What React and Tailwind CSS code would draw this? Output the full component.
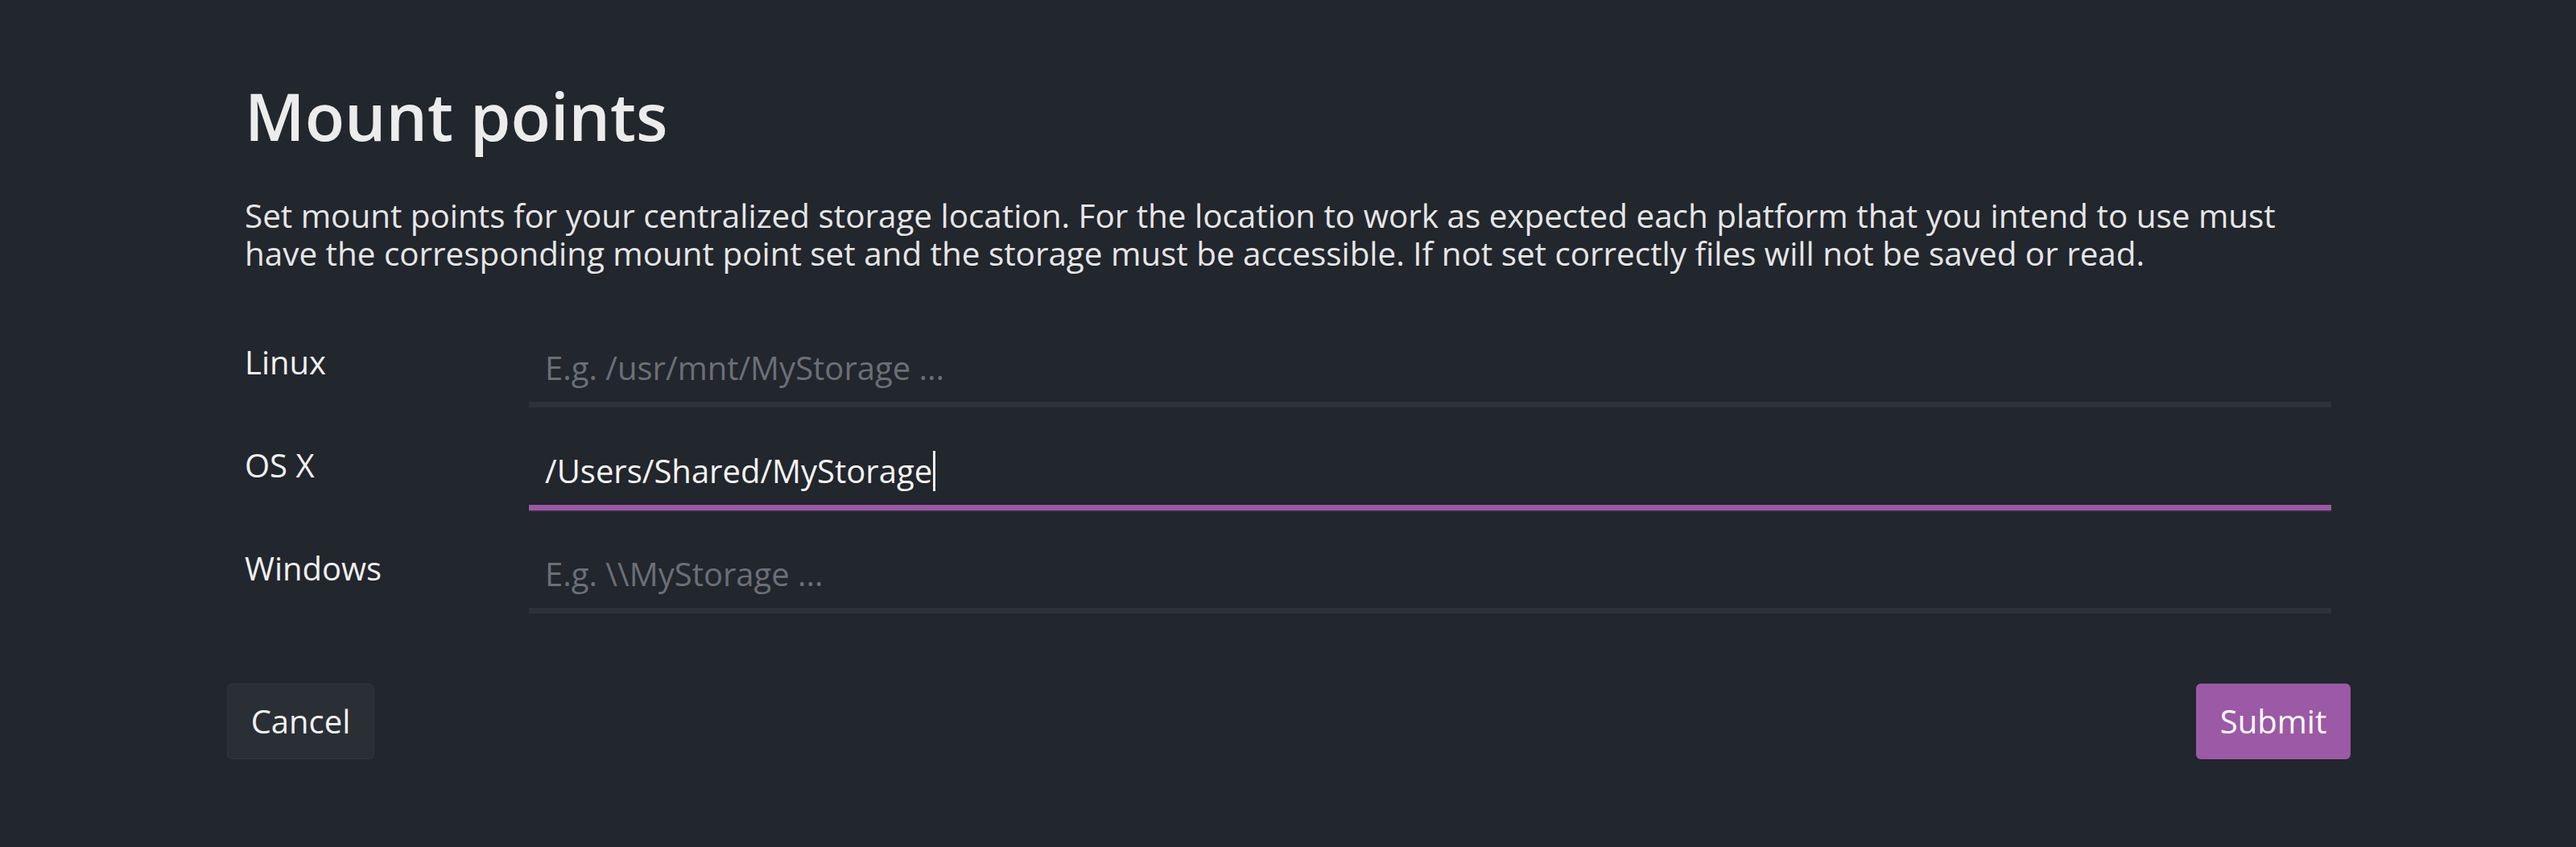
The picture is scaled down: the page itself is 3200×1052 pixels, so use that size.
import React from "react";

const rows = [
  { label: "Linux", placeholder: "E.g. /usr/mnt/MyStorage ..." },
  { label: "OS X", value: "/Users/Shared/MyStorage", focused: true },
  { label: "Windows", placeholder: "E.g. \\\\MyStorage ..." },
];

const MountRow = ({ label, placeholder, value, focused }) => (
  <div className="grid grid-cols-[353px_1fr] items-start">
    <label className="pt-[10px] text-[40px] leading-[52px] text-[#f0f0f0]">
      {label}
    </label>
    {focused ? (
      <div className="flex h-[92px] items-center border-b-[7px] border-[#9b59a6] pl-[20px] text-[40px] text-[#f5f5f5] shadow-[0_2px_0_#3b2c45]">
        <span>{value}</span>
        <span className="ml-[1px] h-[50px] w-[3px] bg-[#f0f0f0]" />
      </div>
    ) : (
      <input
        readOnly
        placeholder={placeholder}
        className="h-[92px] w-full border-b-[7px] border-[#2d3139] bg-transparent pl-[20px] text-[40px] text-[#f5f5f5] outline-none placeholder:text-[#6b6f77]"
      />
    )}
  </div>
);

export default function App() {
  return (
    <div className="min-h-[1052px] w-full bg-[#22262d] font-['Open_Sans',sans-serif]">
      <div className="px-[304px] pt-[96px]">
        <h1 className="text-[81px] font-semibold leading-[96px] text-[#ececec]">
          Mount points
        </h1>
        <p className="mt-[52px] text-[40.4px] leading-[47px] text-[#e6e6e6]">
          Set mount points for your centralized storage location. For the
          location to work as expected each platform that you intend to use
          must have the corresponding mount point set and the storage must be
          accessible. If not set correctly files will not be saved or read.
        </p>
        <div className="mt-[76px] flex flex-col gap-[36px]">
          {rows.map((row) => (
            <MountRow key={row.label} {...row} />
          ))}
        </div>
      </div>
      <div className="mt-[87px] flex items-center justify-between pl-[282px] pr-[280px]">
        <button className="h-[94px] w-[183px] rounded-[6px] border border-[#30343b] bg-[#2a2e35] text-[40px] text-[#f0f0f0]">
          Cancel
        </button>
        <button className="h-[94px] w-[192px] rounded-[6px] bg-[#9b59a6] text-[40px] text-white">
          Submit
        </button>
      </div>
    </div>
  );
}
